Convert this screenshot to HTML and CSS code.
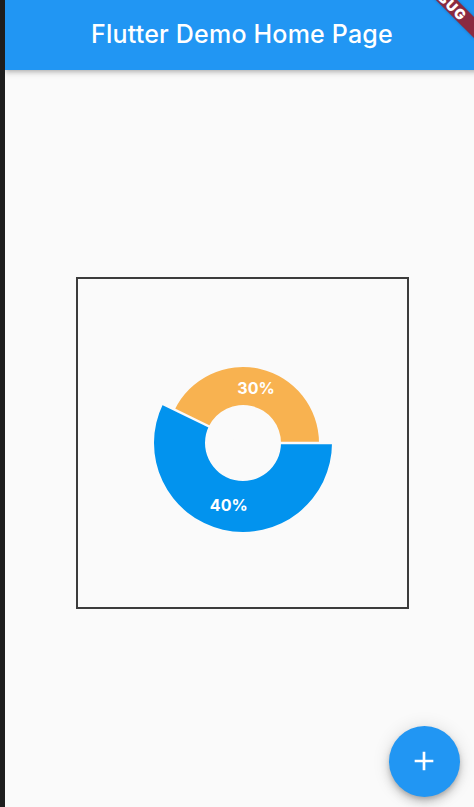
FILE: index.html
```html
<!DOCTYPE html>
<html lang="en">
<head>
<meta charset="utf-8">
<title>Flutter Demo Home Page</title>
<link rel="stylesheet" href="styles.css">
</head>
<body>
<div class="screen">
  <div class="edge"></div>
  <div class="app">
    <header class="appbar">
      <h1 class="title">Flutter Demo Home Page</h1>
    </header>
    <main class="content">
      <div class="chart-box">
        <svg class="pie" width="329" height="328" viewBox="0 0 329 328">
          <path class="slice-blue" d="M254 164 A89 89 0 1 1 85.01 124.99 L130.85 147.34 A38 38 0 1 0 203 164 Z"/>
          <path class="slice-orange" d="M96.69 130.68 A76 76 0 0 1 241 164 L203 164 A38 38 0 0 0 130.85 147.34 Z"/>
          <line class="gap" x1="165" y1="164" x2="262" y2="164"/>
          <line class="gap" x1="165" y1="164" x2="79.6" y2="122.4"/>
          <text class="label" x="178" y="108.5">30%</text>
          <text class="label" x="150.8" y="225.5">40%</text>
        </svg>
      </div>
    </main>
    <button class="fab" type="button" aria-label="Increment">
      <svg width="32" height="32" viewBox="0 0 24 24"><path d="M19 13h-6v6h-2v-6H5v-2h6V5h2v6h6v2z" fill="#fff"/></svg>
    </button>
    <div class="debug-banner">DEBUG</div>
  </div>
</div>
</body>
</html>
```

FILE: styles.css
```css
html, body {
  margin: 0;
  height: 807px;
  overflow: hidden;
  background: #1e1e1e;
}

.screen {
  display: flex;
  width: 474px;
  height: 807px;
  overflow: hidden;
}

.edge {
  flex: 0 0 5px;
  background: #1e1e1e;
}

.app {
  position: relative;
  flex: 0 0 474px;
  height: 816px;
  background: #fafafa;
  display: flex;
  flex-direction: column;
  overflow: hidden;
}

.appbar {
  flex: 0 0 70px;
  background: #2196f3;
  display: flex;
  align-items: center;
  justify-content: center;
  box-shadow: 0 2px 4px -1px rgba(0, 0, 0, 0.2), 0 4px 5px 0 rgba(0, 0, 0, 0.12);
  z-index: 1;
}

.title {
  margin: 0 0 2px 0;
  color: #fff;
  font-family: Inter, "Noto Sans", sans-serif;
  font-weight: 500;
  font-size: 25px;
  letter-spacing: 0.2px;
}

.content {
  flex: 1;
  display: flex;
  align-items: center;
  justify-content: center;
}

.chart-box {
  width: 329px;
  height: 328px;
  border: 2px solid #3c3c3c;
}

.pie {
  display: block;
}

.slice-blue {
  fill: #0293ee;
}

.slice-orange {
  fill: #f8b250;
}

.gap {
  stroke: #fafafa;
  stroke-width: 2.5;
}

.label {
  fill: #fff;
  font-family: Inter, "Noto Sans", sans-serif;
  font-weight: 700;
  font-size: 16px;
  text-anchor: middle;
  dominant-baseline: central;
}

.fab {
  position: absolute;
  right: 19.5px;
  bottom: 19.5px;
  width: 71px;
  height: 71px;
  padding: 0;
  border: none;
  border-radius: 50%;
  background: #2196f3;
  display: flex;
  align-items: center;
  justify-content: center;
  box-shadow: 0 3px 5px -1px rgba(0, 0, 0, 0.2), 0 6px 10px 0 rgba(0, 0, 0, 0.14), 0 1px 18px 0 rgba(0, 0, 0, 0.12);
}

.debug-banner {
  position: absolute;
  left: 389.7px;
  top: -8.85px;
  width: 100px;
  height: 15px;
  line-height: 15px;
  transform: rotate(45deg);
  background: #8a2a40;
  color: #fff;
  font-family: Inter, "Noto Sans", sans-serif;
  font-weight: 900;
  font-size: 14px;
  letter-spacing: 1.2px;
  padding-left: 1.2px;
  box-sizing: border-box;
  text-align: center;
  z-index: 2;
  box-shadow: 0 0 3px rgba(0, 0, 0, 0.25);
}
```
